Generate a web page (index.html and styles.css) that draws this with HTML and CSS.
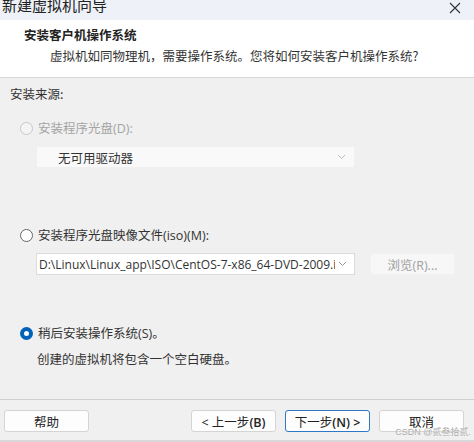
FILE: index.html
```
<!DOCTYPE html>
<html lang="zh-CN">
<head>
    <meta charset="UTF-8">
    <meta name="viewport" content="width=device-width, initial-scale=1.0">
    <title>新建虚拟机向导</title>
<link rel="stylesheet" href="styles.css">
</head>
<body>
<div class="wizard">
    <div class="titlebar">
        <span class="title">新建虚拟机向导</span>
        <svg class="close" width="12" height="12" viewBox="0 0 12 12">
            <path d="M1 1 L11 11 M11 1 L1 11" stroke="#333" stroke-width="1.1" fill="none"/>
        </svg>
    </div>

    <div class="header">
        <h1>安装客户机操作系统</h1>
        <p>虚拟机如同物理机，需要操作系统。您将如何安装客户机操作系统?</p>
    </div>

    <div class="content">
        <div class="group-label">安装来源:</div>

        <!-- installer disc: no drive available, so disabled -->
        <label class="option disabled first">
            <span class="radio"></span>
            <span>安装程序光盘<span class="latin">(D):</span></span>
        </label>
        <div class="combo combo-disabled">
            <span class="combo-text">无可用驱动器</span>
            <svg class="chevron" width="9" height="6" viewBox="0 0 9 6">
                <path d="M1 1 L4.5 4.5 L8 1" stroke="#bbb" stroke-width="1" fill="none"/>
            </svg>
        </div>

        <!-- iso image -->
        <label class="option second">
            <span class="radio"></span>
            <span>安装程序光盘映像文件<span class="latin">(iso)(M):</span></span>
        </label>
        <div class="iso-row">
            <div class="combo combo-iso">
                <span class="combo-path">D:\Linux\Linux_app\ISO\CentOS-7-x86_64-DVD-2009.iso</span>
                <svg class="chevron" width="9" height="6" viewBox="0 0 9 6">
                    <path d="M1 1 L4.5 4.5 L8 1" stroke="#999" stroke-width="1" fill="none"/>
                </svg>
            </div>
            <button class="btn btn-browse" disabled>浏览<span class="latin">(R)...</span></button>
        </div>

        <!-- install later -->
        <label class="option third">
            <span class="radio checked"></span>
            <span>稍后安装操作系统<span class="latin">(S)</span>。</span>
        </label>
        <div class="hint">创建的虚拟机将包含一个空白硬盘。</div>
    </div>

    <div class="footer">
        <button class="btn btn-help">帮助</button>
        <div class="nav">
            <button class="btn"><span class="latin">&lt; </span>上一步<span class="latin bold">(B)</span></button>
            <button class="btn btn-default">下一步<span class="latin bold">(N) &gt;</span></button>
            <button class="btn">取消</button>
        </div>
        <span class="mark">CSDN @贰叁拾贰.</span>
    </div>
</div>
</body>
</html>
```

FILE: styles.css
```
body {
    margin: 0;
    font-family: "Noto Sans CJK SC", sans-serif;
    background-color: #f0f0f0;
}

.wizard {
    width: 474px;
    height: 442px;
    display: flex;
    flex-direction: column;
    overflow: hidden;
    position: relative;
    color: #222;
}

.latin {
    font-family: "Open Sans", "Noto Sans CJK SC", sans-serif;
}

.bold {
    font-weight: 600;
}

/* title bar */
.titlebar {
    height: 20px;
    background-color: #eef1f7;
    display: flex;
    justify-content: space-between;
    align-items: flex-start;
    overflow: hidden;
}

.title {
    font-size: 15px;
    line-height: 14px;
    margin-top: -2px;
    margin-left: 2px;
    color: #222;
}

.close {
    margin-top: 2px;
    margin-right: 13px;
}

/* white page header */
.header {
    height: 58px;
    background-color: #fff;
    border-bottom: 1px solid #d6d6d6;
    padding-left: 24px;
    box-sizing: border-box;
}

.header h1 {
    margin: 0;
    padding-top: 6px;
    font-size: 12.5px;
    line-height: 18px;
    font-weight: bold;
}

.header p {
    margin: 3px 0 0 26px;
    font-size: 12.5px;
    line-height: 18px;
    color: #333;
}

/* body */
.content {
    height: 322px;
    padding-left: 10px;
    box-sizing: border-box;
    font-size: 12.5px;
    display: flex;
    flex-direction: column;
    align-items: flex-start;
    border-bottom: 1px solid #d0d0d0;
}

.group-label {
    margin-top: 6px;
    line-height: 20px;
    color: #333;
}

.option {
    display: flex;
    align-items: center;
    gap: 5px;
    line-height: 20px;
    margin-left: 10px;
    color: #333;
}

.option.first {
    margin-top: 14px;
}

.option.second {
    margin-top: 58px;
}

.option.third {
    margin-top: 48px;
}

.option.disabled {
    color: #a4a4a4;
}

.radio {
    width: 11px;
    height: 11px;
    border: 1px solid #666;
    border-radius: 50%;
    background-color: #fff;
}

.disabled .radio {
    border-color: #c8c8c8;
    background-color: #f4f4f4;
}

.radio.checked {
    width: 5px;
    height: 5px;
    border: 4px solid #0062b8;
    background-color: #fff;
}

.combo {
    display: flex;
    align-items: center;
    justify-content: space-between;
    box-sizing: border-box;
}

.combo-disabled {
    width: 317px;
    height: 20px;
    margin-left: 27px;
    margin-top: 8px;
    background-color: #f9f9f9;
    padding: 0 8px 0 21px;
    color: #333;
}

.iso-row {
    display: flex;
    align-items: center;
    margin-top: 7px;
    margin-left: 26px;
}

.combo-iso {
    width: 319px;
    height: 22px;
    background-color: #fff;
    border: 1px solid #dcdcdc;
    padding: 0 7px 0 2px;
}

.combo-path {
    font-family: "Open Sans", sans-serif;
    font-size: 12px;
    color: #333;
    width: 296px;
    white-space: nowrap;
    overflow: hidden;
}

.hint {
    margin-top: 6px;
    margin-left: 27px;
    line-height: 18px;
    color: #333;
}

/* buttons */
.btn {
    height: 22px;
    width: 85px;
    padding: 0;
    font-family: "Noto Sans CJK SC", sans-serif;
    font-size: 12.5px;
    color: #222;
    background-color: #fdfdfd;
    border: 1px solid #d4d4d4;
    border-radius: 3px;
}

.btn-browse {
    margin-left: 15px;
    background-color: #f7f7f7;
    border-color: #f2f2f2;
    color: #a0a0a0;
}

.btn-default {
    border-color: #2f78c4;
}

.footer {
    flex: 1;
    display: flex;
    justify-content: space-between;
    align-items: flex-start;
    padding: 10px 10px 0 4px;
    border-bottom: 2px solid #d8d8d8;
    position: relative;
}

.nav {
    display: flex;
    gap: 9px;
}

.mark {
    position: absolute;
    right: 3px;
    bottom: 2px;
    font-family: "Liberation Sans", "Noto Sans CJK SC", sans-serif;
    font-size: 9px;
    color: #aaa;
    text-shadow: 0 0 1px #fff;
}
```
